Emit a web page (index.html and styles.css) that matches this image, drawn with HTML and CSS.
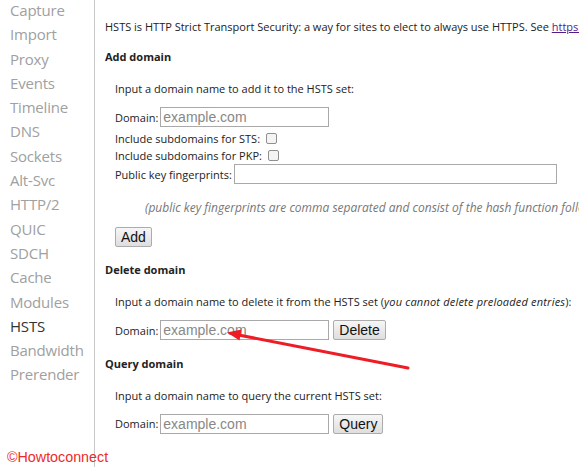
FILE: index.html
```html
<!DOCTYPE html>
<html>
<head>
<meta charset="utf-8">
<link rel="stylesheet" href="styles.css">
</head>
<body>
<div class="page">
  <nav class="sidebar">
    <div class="tab">Capture</div>
    <div class="tab">Import</div>
    <div class="tab">Proxy</div>
    <div class="tab">Events</div>
    <div class="tab">Timeline</div>
    <div class="tab">DNS</div>
    <div class="tab">Sockets</div>
    <div class="tab">Alt-Svc</div>
    <div class="tab">HTTP/2</div>
    <div class="tab">QUIC</div>
    <div class="tab">SDCH</div>
    <div class="tab">Cache</div>
    <div class="tab">Modules</div>
    <div class="tab active">HSTS</div>
    <div class="tab">Bandwidth</div>
    <div class="tab">Prerender</div>
  </nav>
  <main class="content">
    <p class="intro">HSTS is HTTP Strict Transport Security: a way for sites to elect to always use HTTPS. See <a href="#">https://www.chromium.org/hsts</a></p>

    <h4>Add domain</h4>
    <div class="section">
      <p class="desc">Input a domain name to add it to the HSTS set:</p>
      <div class="row field">Domain: <input class="domain" type="text" placeholder="example.com"></div>
      <div class="row small sts">Include subdomains for STS: <span class="check"></span></div>
      <div class="row small">Include subdomains for PKP: <span class="check"></span></div>
      <div class="row fprow">Public key fingerprints: <input class="fp" type="text"></div>
      <p class="note">(public key fingerprints are comma separated and consist of the hash function followed by a slash and the base64 hash)</p>
      <button class="btn add">Add</button>
    </div>

    <h4 class="del">Delete domain</h4>
    <div class="section">
      <p class="desc">Input a domain name to delete it from the HSTS set (<i>you cannot delete preloaded entries</i>):</p>
      <div class="row field">Domain: <input class="domain" type="text" placeholder="example.com"> <button class="btn">Delete</button></div>
    </div>

    <h4 class="query">Query domain</h4>
    <div class="section">
      <p class="desc">Input a domain name to query the current HSTS set:</p>
      <div class="row field">Domain: <input class="domain" type="text" placeholder="example.com"> <button class="btn">Query</button></div>
    </div>
  </main>
</div>
<svg class="arrow" width="579" height="467" viewBox="0 0 579 467">
  <line x1="408" y1="368" x2="236" y2="334.5" stroke="#ee1c24" stroke-width="3" stroke-linecap="round"/>
  <polygon points="227,332.5 241.5,329.5 239.5,340.5" fill="#ee1c24"/>
</svg>
<div class="watermark">©Howtoconnect</div>
</body>
</html>
```
FILE: styles.css
```css
html, body {
  margin: 0;
  padding: 0;
  background: #fff;
  height: 100%;
  overflow: hidden;
}
body {
  font-family: "Open Sans", "Noto Sans", sans-serif;
  color: #222;
  position: relative;
}
.page {
  display: flex;
  height: 467px;
}
.sidebar {
  width: 84px;
  flex: none;
  padding-left: 10px;
  border-right: 1px solid #c8c8c8;
  display: flex;
  flex-direction: column;
  margin-top: -2px;
}
.tab {
  font-size: 15px;
  line-height: 24.3px;
  color: #a0a0a0;
  letter-spacing: -0.2px;
}
.tab.active {
  color: #333;
}
.content {
  flex: 1;
  padding-left: 10px;
  font-size: 11px;
  white-space: nowrap;
  overflow: hidden;
}
.intro {
  margin: 19px 0 0;
  line-height: 15px;
}
.intro a {
  color: #551a8b;
}
h4 {
  font-size: 11px;
  font-weight: bold;
  margin: 15px 0 0;
  line-height: 15px;
}
h4.del {
  margin-top: 15.5px;
}
h4.query {
  margin-top: 15.5px;
}
.section {
  padding-left: 10px;
}
.desc {
  margin: 17px 0 0;
  line-height: 15px;
}
.desc i {
  letter-spacing: 0.2px;
}
.row {
  display: flex;
  align-items: center;
  gap: 2px;
  line-height: 17px;
}
.row.field {
  margin-top: 11px;
}
.row.small {
  line-height: 17px;
}
.row.sts {
  margin-top: 2.5px;
}
.row.fprow {
  margin-top: 0.5px;
}
input {
  font-family: "Liberation Sans", Arial, sans-serif;
  font-size: 14px;
  border: 1px solid #a9a9a9;
  padding: 1px 2px;
  height: 16px;
  box-sizing: content-box;
  margin: 0;
}
input::placeholder {
  color: #888;
}
.domain {
  width: 163px;
}
.fp {
  width: 317px;
}
.check {
  display: inline-block;
  width: 9px;
  height: 9px;
  border: 1px solid #8f8f8f;
  border-radius: 2px;
  background: #f4f4f4;
  margin-left: 4px;
}
.note {
  font-style: italic;
  color: #777;
  margin: 16px 0 0 30px;
  line-height: 15px;
  font-size: 12px;
}
.btn {
  font-family: "Liberation Sans", Arial, sans-serif;
  font-size: 14px;
  color: #111;
  background: linear-gradient(#f6f6f6, #dedede);
  border: 1px solid #acacac;
  border-radius: 2px;
  height: 20px;
  line-height: 18px;
  padding: 0 5px;
  margin: 0;
}
.btn.add {
  margin-top: 11.5px;
  display: block;
}
.row .btn {
  margin-left: 2px;
}
.arrow {
  position: absolute;
  left: 0;
  top: 0;
  pointer-events: none;
}
.watermark {
  position: absolute;
  left: 7px;
  top: 449px;
  font-family: "Liberation Sans", Arial, sans-serif;
  font-size: 14.3px;
  color: #ee2a2a;
}
```
